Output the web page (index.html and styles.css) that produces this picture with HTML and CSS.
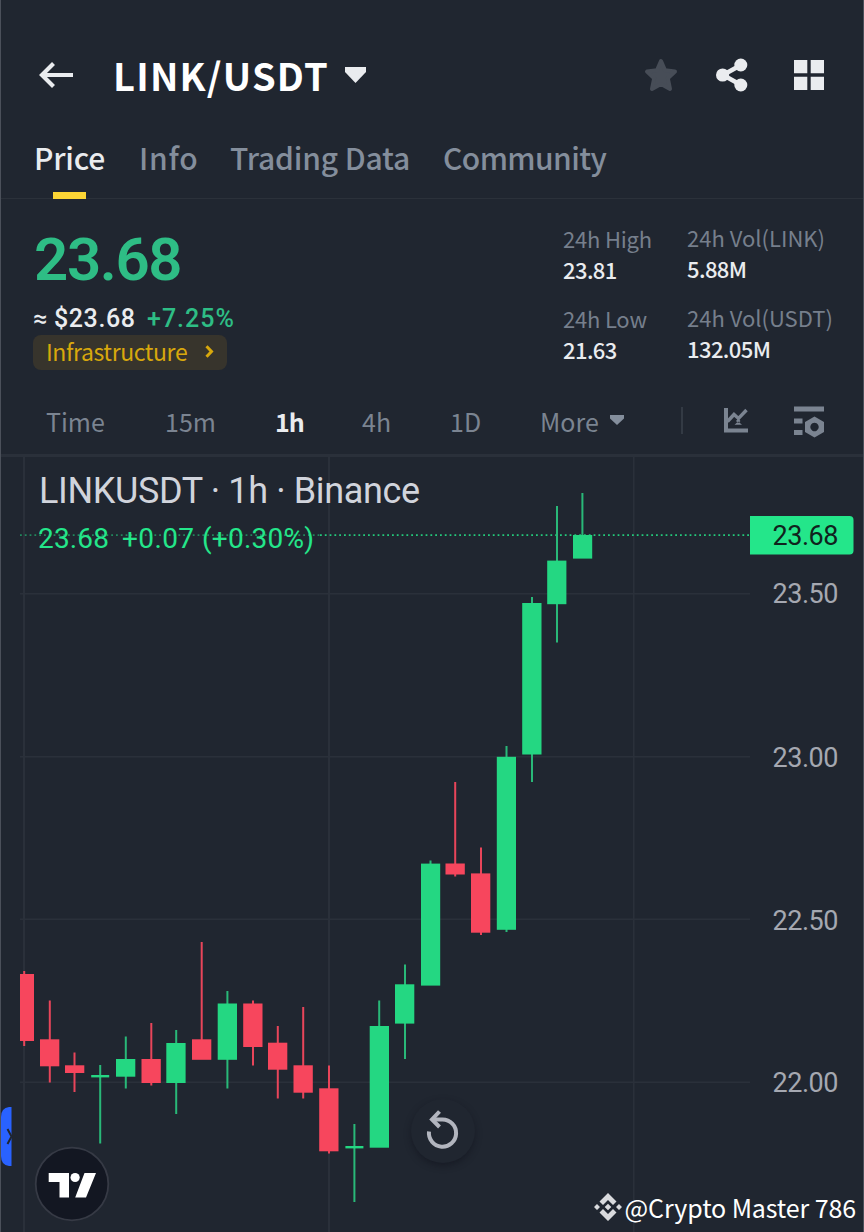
FILE: index.html
```html
<!DOCTYPE html>
<html lang="en">
<head>
    <meta charset="utf-8">
    <title>LINK/USDT</title>
    <link rel="stylesheet" href="styles.css">
</head>
<body>
    <div class="app">
        <header class="header">
            <svg class="back" width="34" height="28" viewBox="0 0 34 28" fill="none" stroke="#eaecef" stroke-width="4.2">
                <path d="M34 14H4M14.5 2.5L3 14L14.5 25.5"/>
            </svg>
            <h1 class="pair">LINK/USDT</h1>
            <svg class="pair-arrow" width="21" height="16" viewBox="0 0 21 16" fill="#eaecef"><path d="M0 0H21V5L10.5 16L0 5Z"/></svg>
            <div class="header-icons">
                <svg width="34" height="34" viewBox="0 0 34 34" fill="#474d57" stroke="#474d57" stroke-width="4" stroke-linejoin="round">
                    <path d="M17 3L21 12.2L31 13.5L23.8 20.2L26 31L17 26L8 31L10.2 20.2L3 13.5L13 12.2Z"/>
                </svg>
                <svg width="32" height="34" viewBox="0 0 32 34" fill="#eaecef">
                    <path d="M7 17L25 7M7 17L25 27" stroke="#eaecef" stroke-width="4.5"/>
                    <circle cx="6.6" cy="17" r="6.6"/><circle cx="24.8" cy="7" r="6.5"/><circle cx="24.8" cy="27" r="6.5"/>
                </svg>
                <svg width="30" height="30" viewBox="0 0 30 30" fill="#eaecef"><path d="M0 0h13.3v13.3H0zM16.7 0H30v13.3H16.7zM0 16.7h13.3V30H0zM16.7 16.7H30V30H16.7z"/></svg>
            </div>
        </header>

        <nav class="tabs">
            <a class="tab tab-price active">Price</a>
            <a class="tab tab-info">Info</a>
            <a class="tab tab-data">Trading Data</a>
            <a class="tab tab-community">Community</a>
        </nav>

        <section class="summary">
            <div class="summary-left">
                <div class="last-price">23.68</div>
                <div class="fiat"><span class="approx">≈</span><span class="fiat-price">$23.68</span><span class="change">+7.25%</span></div>
                <div class="tag"><span>Infrastructure</span>
                    <svg width="9" height="13" viewBox="0 0 9 13" fill="none" stroke="#d8a80c" stroke-width="3"><path d="M1.5 1.2L6.5 6.5L1.5 11.8"/></svg>
                </div>
            </div>
            <div class="stats">
                <div class="stat"><span class="label">24h High</span><span class="value">23.81</span></div>
                <div class="stat stat-vol"><span class="label">24h Vol(LINK)</span><span class="value">5.88M</span></div>
                <div class="stat"><span class="label">24h Low</span><span class="value">21.63</span></div>
                <div class="stat stat-vol"><span class="label">24h Vol(USDT)</span><span class="value">132.05M</span></div>
            </div>
        </section>

        <div class="intervals">
            <span class="int-time">Time</span>
            <span class="int-15m">15m</span>
            <span class="int-1h active">1h</span>
            <span class="int-4h">4h</span>
            <span class="int-1d">1D</span>
            <span class="int-more">More</span>
            <svg class="more-arrow" width="14" height="10" viewBox="0 0 14 10" fill="#848e9c"><path d="M0 0H14V3.5L7 10L0 3.5Z"/></svg>
            <i class="divider"></i>
            <svg class="chart-icon" width="25" height="25" viewBox="0 0 25 25" fill="none" stroke="#7b8491" stroke-width="4">
                <path d="M2 0V22.5H24"/>
                <path d="M3.5 13.5L10 6.5L14.5 10.5L22.5 2" stroke-width="3.4"/>
                <path d="M14.2 10.5L16.5 13L14.2 15L12 13ZM10.5 16.7H18L14.2 13.5Z" fill="#7b8491" stroke="none"/>
            </svg>
            <svg class="settings-icon" width="32" height="32" viewBox="0 0 32 32" fill="#7b8491">
                <path d="M1 0.5h30v5H1zM1 12.5h8.5v5H1zM1 24h8.5v5H1z"/>
                <path fill-rule="evenodd" d="M21.5 10.5L31 16V26L21.5 31.5L12 26V16ZM21.5 16.8a4.2 4.2 0 1 0 0.01 0Z"/>
            </svg>
        </div>

        <main class="chart">
            <svg class="plot" width="864" height="778" viewBox="0 454 864 778">
                <rect class="grid" x="0" y="454" width="864" height="3"/>
                <g class="grid">
                    <rect x="23" y="454" width="2" height="778"/>
                    <rect x="328" y="454" width="2" height="778"/>
                    <rect x="633" y="454" width="1.5" height="778"/>
                    <rect x="20" y="593" width="730" height="1.5"/>
                    <rect x="20" y="756" width="730" height="1.5"/>
                    <rect x="20" y="918.5" width="730" height="1.5"/>
                    <rect x="20" y="1081.5" width="730" height="1.5"/>
                </g>

                <!-- last price line -->
                <path class="price-line dim" d="M20 535.2H320"/>
                <path class="price-line" d="M320 535.2H750"/>

                <!-- wicks -->
                <path class="wick down" d="M24.2 971V1046M49.8 1000.5V1082.5M74.5 1052.5V1092M151.3 1023V1085.5M201.7 942V1059M253 1000.5V1065.5M277.8 1026V1098.5M303.2 1007V1098.5M329 1065.5V1153.5M455.2 782V876.5M481 847.5V935"/>
                <path class="wick up" d="M100.2 1065V1143.5M125.8 1036.5V1088.5M176.2 1030V1114M227.4 991V1088.5M354.4 1124V1202M379.2 1000.5V1100M405 964.5V1059M430.5 860.5V900M506.5 746V932M532 597V782M557 506V642.5M582.4 493V540"/>

                <!-- bodies -->
                <g class="body-down">
                    <rect x="20" y="974" width="14" height="67"/>
                    <rect x="40" y="1039.3" width="19.3" height="27"/>
                    <rect x="65" y="1065.3" width="19.3" height="7.7"/>
                    <rect x="141.5" y="1059" width="19.3" height="24"/>
                    <rect x="192" y="1039.3" width="19.3" height="20.5"/>
                    <rect x="243.2" y="1003.5" width="19.3" height="43.5"/>
                    <rect x="268" y="1042.7" width="19.3" height="27"/>
                    <rect x="293.5" y="1065.3" width="19.3" height="27.4"/>
                    <rect x="319.2" y="1088.3" width="19.3" height="63"/>
                    <rect x="445.5" y="863.5" width="19.3" height="11"/>
                    <rect x="471" y="873.4" width="19.3" height="59.3"/>
                </g>
                <g class="body-up">
                    <rect x="91.2" y="1075" width="18" height="2.4"/>
                    <rect x="116" y="1059" width="19.3" height="17.7"/>
                    <rect x="166.3" y="1043" width="19.3" height="40"/>
                    <rect x="217.7" y="1003.5" width="19.3" height="56.3"/>
                    <rect x="345.4" y="1146" width="18" height="2.4"/>
                    <rect x="369.7" y="1026" width="19.3" height="121.7"/>
                    <rect x="395" y="984.3" width="19.3" height="39.3"/>
                    <rect x="421" y="863.6" width="19.2" height="122"/>
                    <rect x="496.8" y="756.8" width="19.2" height="173"/>
                    <rect x="522.2" y="603" width="19.3" height="151.5"/>
                    <rect x="547.2" y="560.6" width="19.2" height="43.6"/>
                    <rect x="573" y="535" width="19.2" height="23.6"/>
                </g>

                <!-- price scale -->
                <path d="M750 516H849.5Q853.5 516 853.5 520V550.5Q853.5 554.5 849.5 554.5H750Z" fill="#24e68a"/>
                <g class="scale">
                    <text class="current" x="772.5" y="545" textLength="66">23.68</text>
                    <text x="772.5" y="603.3" textLength="66">23.50</text>
                    <text x="772.5" y="766.5" textLength="66">23.00</text>
                    <text x="772.5" y="929.5" textLength="66">22.50</text>
                    <text x="772.5" y="1092" textLength="66">22.00</text>
                </g>

                <text class="symbol" x="39" y="502.8" textLength="381">LINKUSDT · 1h · Binance</text>
                <g class="legend">
                    <text x="38" y="547.8" textLength="71">23.68</text>
                    <text x="122" y="547.8" textLength="72">+0.07</text>
                    <text x="202" y="547.8" textLength="112">(+0.30%)</text>
                </g>

                <!-- side panel handle -->
                <path d="M11.5 1107H9Q1 1108 1 1117V1156Q1 1165 9 1166H11.5Z" fill="#2962ff"/>
                <path d="M7.5 1129L11.5 1136.5L7.5 1144" fill="none" stroke="#202630" stroke-width="2"/>

                <circle cx="72" cy="1184" r="36.3" fill="#131722" stroke="#363a45" stroke-width="1.8"/>
                <g fill="#fff">
                    <path d="M48.7 1173H69V1197.5H59.5V1182H48.7ZM84.5 1173H96L86 1197.5H75.2Z"/>
                    <circle cx="75.1" cy="1177.5" r="4.6"/>
                </g>
            </svg>

            <button class="reset">
                <svg width="34" height="40" viewBox="0 0 34 40" fill="none" stroke="#b2b5be" stroke-width="4">
                    <path d="M3 21.5A13.6 13.6 0 1 0 16.5 9.5H7"/><path d="M13.5 1.5L6 9.5L13.5 17"/>
                </svg>
            </button>

            <div class="watermark">
                <svg width="28" height="28" viewBox="0 0 28 28" fill="#d9dadd">
                    <path d="M14 0L22.5 8.5L19 12L14 7L9 12L5.5 8.5ZM14 28L22.5 19.5L19 16L14 21L9 16L5.5 19.5ZM3 11L6 14L3 17L0 14ZM25 11L28 14L25 17L22 14ZM14 10.7L17.3 14L14 17.3L10.7 14Z"/>
                </svg>
                <span>@Crypto Master 786</span>
            </div>
        </main>
    </div>
</body>
</html>
```

FILE: styles.css
```css
* {
    box-sizing: border-box;
}

body {
    margin: 0;
    background-color: #202630;
    color: #eaecef;
    font-family: "Noto Sans CJK SC", "Open Sans", sans-serif;
}

.app {
    width: 864px;
    height: 1232px;
    overflow: hidden;
    border-left: 1px solid #4b505a;
    border-right: 1px solid #4b505a;
    white-space: nowrap;
}

.header {
    display: flex;
    align-items: center;
    height: 130px;
    padding: 20px 39px 0 38px;
}

.pair {
    width: 230px;
    margin: 0 0 0 40px;
    font-size: 38px;
    font-weight: 700;
    line-height: 48px;
    letter-spacing: 1.2px;
    color: #fff;
}

.pair-arrow {
    flex: none;
    margin-left: 2px;
}

.header-icons {
    display: flex;
    align-items: center;
    margin-left: auto;
}

.header-icons svg:nth-child(2) {
    margin: 0 46px 0 38px;
}

.tabs {
    display: flex;
    height: 69px;
    padding-left: 33px;
    border-bottom: 1px solid #2b313a;
    font-size: 30px;
    line-height: 55px;
    font-weight: 500;
    color: #848e9c;
}

.tab {
    position: relative;
}

.tab-price {
    width: 105px;
    letter-spacing: -0.2px;
}

.tab-info {
    width: 91px;
    letter-spacing: 0.7px;
}

.tab-data {
    width: 213px;
    letter-spacing: -0.15px;
}

.tab-community {
    letter-spacing: -0.6px;
}

.tab.active {
    color: #eaecef;
}

.tab.active::after {
    content: "";
    position: absolute;
    left: 19px;
    bottom: -1px;
    width: 33px;
    height: 7px;
    background-color: #fcd535;
}

.summary {
    display: flex;
    height: 191px;
    padding-left: 32px;
}

.summary-left {
    width: 530px;
}

.last-price {
    height: 79px;
    padding: 25px 0 0 1px;
    font-family: Roboto, sans-serif;
    font-size: 60px;
    line-height: 72px;
    font-weight: 600;
    letter-spacing: -1.4px;
    color: #2ebd85;
}

.fiat {
    display: flex;
    margin-top: 21px;
    padding-top: 2px;
    font-family: Roboto, sans-serif;
    font-size: 25px;
    line-height: 34px;
    font-weight: 500;
    letter-spacing: 1px;
}

.fiat span {
    position: relative;
    top: 1px;
}

.approx {
    width: 21px;
}

.fiat-price {
    width: 93px;
    letter-spacing: 0.6px;
}

.change {
    color: #2ebd85;
}

.tag {
    display: flex;
    align-items: center;
    width: 194px;
    height: 35px;
    padding-left: 13px;
    border-radius: 8px;
    background-color: #37342c;
    color: #d8a80c;
    font-size: 23px;
    line-height: 30px;
    letter-spacing: -0.4px;
}

.tag span {
    margin-top: -4px;
}

.tag svg {
    margin-left: auto;
    margin-right: 13px;
    margin-top: -2px;
}

.stats {
    display: grid;
    grid-template-columns: 124px 160px;
    grid-template-rows: 80px 80px;
    padding-top: 24px;
}

.stat {
    display: flex;
    flex-direction: column;
    font-size: 22px;
    line-height: 31px;
    letter-spacing: -0.2px;
}

.stat-vol {
    margin-top: -1px;
    letter-spacing: 0;
}

.label {
    color: #767f8c;
}

.value {
    font-weight: 500;
    color: #eaecef;
    letter-spacing: -0.6px;
}

.intervals {
    display: flex;
    align-items: center;
    height: 64px;
    padding: 0 0 3px 45px;
    font-size: 25px;
    color: #7b8491;
}

.intervals .active {
    color: #eaecef;
    font-weight: 700;
    letter-spacing: -1px;
}

.int-time {
    width: 119px;
}

.int-15m {
    width: 110px;
}

.int-1h {
    width: 87px;
}

.int-4h {
    width: 88px;
}

.int-1d {
    width: 90px;
}

.int-more {
    width: 70px;
}

.more-arrow {
    margin-top: -2px;
}

.divider {
    width: 2px;
    height: 27px;
    margin-left: 57px;
    background-color: #333a44;
}

.chart-icon {
    margin-left: 41px;
}

.settings-icon {
    margin-left: 44px;
    margin-top: 2px;
}

.chart {
    position: relative;
    height: 778px;
}

.plot {
    display: block;
    margin-left: -1px;
    font-family: Roboto, sans-serif;
}

.grid {
    fill: #2a303a;
}

.price-line {
    stroke: #24c97b;
    stroke-width: 1.8;
    stroke-dasharray: 1.8 3;
}

.dim {
    opacity: 0.6;
}

.wick {
    fill: none;
    stroke-width: 2;
}

.up {
    stroke: #29b878;
}

.down {
    stroke: #e8455a;
}

.body-up {
    fill: #24d782;
}

.body-down {
    fill: #f7465d;
}

.scale {
    font-size: 27px;
    fill: #a5a8b1;
}

.scale .current {
    fill: #10231d;
}

.symbol {
    font-size: 36px;
    fill: #d1d4dc;
}

.legend {
    font-size: 28px;
    fill: #24e68a;
}

.reset {
    position: absolute;
    left: 410px;
    top: 645px;
    width: 64px;
    height: 64px;
    padding: 0 0 3px;
    border: none;
    border-radius: 50%;
    background-color: #202630;
    box-shadow: 0 3px 6px rgba(15, 17, 27, 0.5);
}

.reset svg {
    display: block;
    margin: auto;
}

.watermark {
    position: absolute;
    right: 7px;
    bottom: 8px;
    display: flex;
    align-items: center;
    gap: 3px;
    font-size: 25px;
    line-height: 34px;
    letter-spacing: -0.1px;
    color: #fff;
}
```
